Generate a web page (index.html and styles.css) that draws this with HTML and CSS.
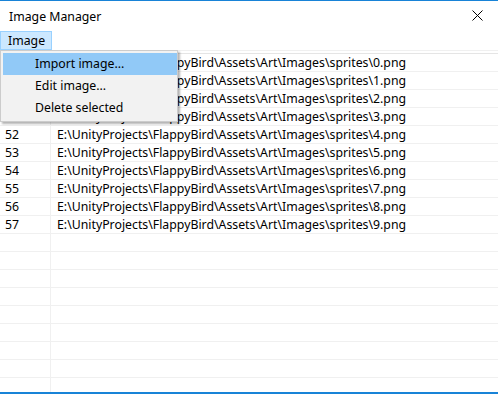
FILE: index.html
```html
<!DOCTYPE html>
<html lang="en">
<head>
    <meta charset="UTF-8">
    <title>Image Manager</title>
    <link rel="stylesheet" href="styles.css">
</head>
<body>
    <div class="window">
        <div class="title-bar">
            <div class="title-text">Image Manager</div>
            <div class="close-btn">
                <svg width="11" height="11" viewBox="0 0 11 11">
                    <path d="M0.5 0.5 L10.5 10.5 M10.5 0.5 L0.5 10.5" stroke="#000" stroke-width="1" fill="none"/>
                </svg>
            </div>
        </div>
        <div class="menu-bar">
            <div class="menu-item active">Image</div>
        </div>
        <div class="grid">
            <div class="grid-header"></div>
            <div class="row"><div class="cell-num">48</div><div class="cell-path">E:\UnityProjects\FlappyBird\Assets\Art\Images\sprites\0.png</div></div>
            <div class="row"><div class="cell-num">49</div><div class="cell-path">E:\UnityProjects\FlappyBird\Assets\Art\Images\sprites\1.png</div></div>
            <div class="row"><div class="cell-num">50</div><div class="cell-path">E:\UnityProjects\FlappyBird\Assets\Art\Images\sprites\2.png</div></div>
            <div class="row"><div class="cell-num">51</div><div class="cell-path">E:\UnityProjects\FlappyBird\Assets\Art\Images\sprites\3.png</div></div>
            <div class="row"><div class="cell-num">52</div><div class="cell-path">E:\UnityProjects\FlappyBird\Assets\Art\Images\sprites\4.png</div></div>
            <div class="row"><div class="cell-num">53</div><div class="cell-path">E:\UnityProjects\FlappyBird\Assets\Art\Images\sprites\5.png</div></div>
            <div class="row"><div class="cell-num">54</div><div class="cell-path">E:\UnityProjects\FlappyBird\Assets\Art\Images\sprites\6.png</div></div>
            <div class="row"><div class="cell-num">55</div><div class="cell-path">E:\UnityProjects\FlappyBird\Assets\Art\Images\sprites\7.png</div></div>
            <div class="row"><div class="cell-num">56</div><div class="cell-path">E:\UnityProjects\FlappyBird\Assets\Art\Images\sprites\8.png</div></div>
            <div class="row"><div class="cell-num">57</div><div class="cell-path">E:\UnityProjects\FlappyBird\Assets\Art\Images\sprites\9.png</div></div>
            <div class="row"><div class="cell-num"></div><div class="cell-path"></div></div>
            <div class="row"><div class="cell-num"></div><div class="cell-path"></div></div>
            <div class="row"><div class="cell-num"></div><div class="cell-path"></div></div>
            <div class="row"><div class="cell-num"></div><div class="cell-path"></div></div>
            <div class="row"><div class="cell-num"></div><div class="cell-path"></div></div>
            <div class="row"><div class="cell-num"></div><div class="cell-path"></div></div>
            <div class="row"><div class="cell-num"></div><div class="cell-path"></div></div>
            <div class="row"><div class="cell-num"></div><div class="cell-path"></div></div>
            <div class="row"><div class="cell-num"></div><div class="cell-path"></div></div>
        </div>
        <div class="dropdown">
            <div class="dropdown-item selected">Import image...</div>
            <div class="dropdown-item">Edit image...</div>
            <div class="dropdown-item">Delete selected</div>
        </div>
    </div>
</body>
</html>
```

FILE: styles.css
```css
body {
    margin: 0;
    font-family: "Noto Sans", "Open Sans", sans-serif;
    font-size: 12.3px;
    color: #000;
    background: #fff;
    overflow: hidden;
}
.window {
    position: relative;
    width: 498px;
    height: 394px;
    box-sizing: border-box;
    border-top: 1px solid #1883d7;
    border-bottom: 2px solid #1883d7;
    overflow: hidden;
    display: flex;
    flex-direction: column;
}
.title-bar {
    height: 30px;
    display: flex;
    align-items: center;
    justify-content: space-between;
    padding-left: 9px;
    flex-shrink: 0;
}
.close-btn {
    width: 46px;
    height: 30px;
    display: flex;
    align-items: center;
    justify-content: center;
    margin-right: -2px;
}
.close-btn svg {
    display: block;
    margin-top: -1px;
}
.menu-bar {
    height: 19px;
    display: flex;
    flex-shrink: 0;
}
.menu-item {
    padding: 0 6px 0 7px;
    line-height: 17px;
    border: 1px solid transparent;
}
.menu-item.active {
    background: #cce8ff;
    border-color: #99d1ff;
}
.grid {
    flex: 1;
    border-top: 1px solid #f0f0f0;
}
.grid-header {
    height: 2px;
    border-bottom: 1px solid #e5e5e5;
}
.row {
    display: flex;
    height: 17px;
    border-bottom: 1px solid #f0f0f0;
    line-height: 17px;
    white-space: nowrap;
}
.cell-num {
    width: 45px;
    padding-left: 5px;
    border-right: 1px solid #f0f0f0;
    flex-shrink: 0;
}
.cell-path {
    padding-left: 6px;
}
.dropdown {
    position: absolute;
    left: 0;
    top: 49px;
    width: 174px;
    padding: 2px 0 2px 2px;
    background: #f2f2f2;
    border: 1px solid #cccccc;
    box-shadow: 2px 2px 2px rgba(0, 0, 0, 0.3);
}
.dropdown-item {
    height: 22px;
    line-height: 22px;
    padding-left: 32px;
}
.dropdown-item.selected {
    background: #91c9f7;
}
```
